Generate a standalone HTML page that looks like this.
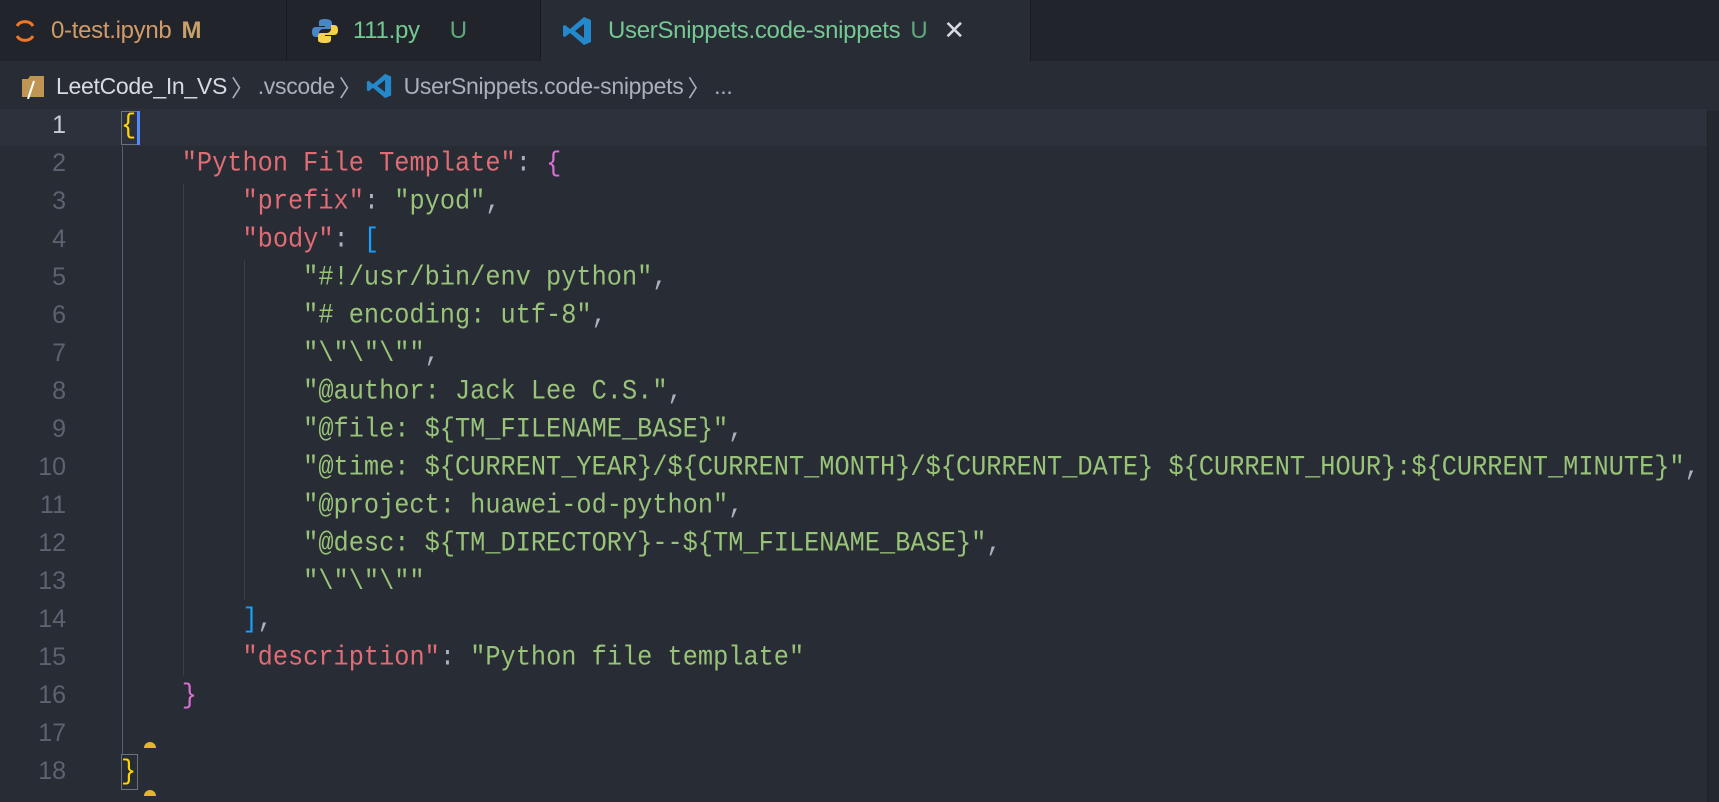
<!DOCTYPE html>
<html><head><meta charset="utf-8"><style>
*{margin:0;padding:0;box-sizing:border-box}
body{width:1719px;height:802px;background:#282c34;overflow:hidden;position:relative;font-family:"Liberation Sans",sans-serif}
#tabs{position:absolute;left:0;top:0;width:1719px;height:61px;background:#21252b}
.tab{position:absolute;top:0;height:61px;border-right:1px solid #181a1f;display:flex;align-items:center;font-size:24px;white-space:nowrap;letter-spacing:-0.3px}
#crumb{position:absolute;left:0;top:61px;width:1719px;height:50px;color:#a9b0bd;font-size:23px;display:flex;align-items:center;letter-spacing:-0.3px}
.ln{position:absolute;left:0;width:66px;text-align:right;color:#5c6370;font-family:"Liberation Sans",sans-serif;font-size:25px}
.code{position:absolute;left:121px;font-family:"Liberation Mono",monospace;font-size:25.3px;white-space:pre;color:#abb2bf;transform:scaleY(1.08);transform-origin:0 50%}
.k{color:#e06c75}.s{color:#98c379}.y{color:#ffd700}.p{color:#da70d6}.b{color:#179fff}
.g{position:absolute;width:1px;background:#3b4048}
</style></head><body>
<div id="tabs">
 <div class="tab" style="left:0;width:287px">
  <svg style="margin-left:14px" width="22" height="28" viewBox="0 0 22 28"><path d="M3 9 A9 8 0 0 1 19 9" stroke="#f37626" stroke-width="3" fill="none"/><path d="M3 19 A9 8 0 0 0 19 19" stroke="#f37626" stroke-width="3" fill="none"/></svg>
  <span style="color:#d19a66;margin-left:15px">0-test.ipynb</span><span style="color:#c8a06a;margin-left:10px;font-weight:bold">M</span></div>
 <div class="tab" style="left:287px;width:254px">
  <svg style="margin-left:24px" width="28" height="28" viewBox="0 0 28 28"><path d="M14 2c-6 0-6 2-6 4v3h6v1H5c-3 0-4 2-4 5s1 5 4 5h3v-4c0-2 2-4 4-4h6c2 0 3-1 3-3V6c0-2-2-4-7-4z" fill="#4a86c5"/><path d="M14 26c6 0 6-2 6-4v-3h-6v-1h9c3 0 4-2 4-5s-1-5-4-5h-3v4c0 2-2 4-4 4h-6c-2 0-3 1-3 3v4c0 2 2 3 7 3z" fill="#f7d14a"/></svg>
  <span style="color:#73c991;margin-left:14px">111.py</span><span style="color:#5fa77a;margin-left:30px">U</span></div>
 <div class="tab" style="left:541px;width:490px;background:#282c34">
  <svg style="margin-left:21px" width="30" height="30" viewBox="0 0 30 30"><path d="M22 1 L29 4 V26 L22 29 L8 17 L3 21 L1 20 V10 L3 9 L8 13 Z M22 8 L13 15 L22 22 Z" fill="#2489ca"/></svg>
  <span style="color:#73c991;margin-left:16px">UserSnippets.code-snippets</span><span style="color:#5fa77a;margin-left:10px">U</span><span style="color:#d7dae0;margin-left:16px;font-size:26px">✕</span></div>
</div>
<div id="crumb">
 <svg style="margin-left:20px" width="26" height="26" viewBox="0 0 26 26"><path d="M2 6h6l2-3h14v21H2z" fill="#c09553"/><path d="M14 8 L8 26" stroke="#fff" stroke-width="2"/></svg>
 <span style="margin-left:10px;color:#d7dae0">LeetCode_In_VS</span><span style="margin:0 4px">〉</span><span>.vscode</span><span style="margin:0 4px">〉</span>
 <svg width="26" height="26" viewBox="0 0 30 30"><path d="M22 1 L29 4 V26 L22 29 L8 17 L3 21 L1 20 V10 L3 9 L8 13 Z M22 8 L13 15 L22 22 Z" fill="#2489ca"/></svg>
 <span style="margin-left:12px">UserSnippets.code-snippets</span><span style="margin:0 4px">〉</span><span>...</span>
</div>
<div style="position:absolute;left:0;top:109px;width:1707px;height:37px;background:#2c313c"></div>
<div style="position:absolute;left:1707px;top:111px;width:12px;height:691px;background:#23272e;border-left:1px solid #1e2127"></div>
<div style="position:absolute;left:121px;top:111px;width:17px;height:34px;border:1px solid #6b717d"></div>
<div style="position:absolute;left:137px;top:111px;width:3px;height:34px;background:#528bff"></div>
<div style="position:absolute;left:121px;top:754px;width:17px;height:36px;border:1px solid #6b717d"></div>
<div class="g" style="left:122px;top:146px;height:608px;background:#5a606b"></div>
<div class="g" style="left:183px;top:184px;height:492px"></div>
<div class="g" style="left:244px;top:260px;height:340px"></div>
<div style="position:absolute;left:144px;top:742px;width:12px;height:6px;background:#e5b530;border-radius:6px 6px 0 0"></div>
<div style="position:absolute;left:144px;top:790px;width:12px;height:6px;background:#e5b530;border-radius:6px 6px 0 0"></div>
<div class="ln" style="top:111px;color:#c8ccd4">1</div>
<div class="ln" style="top:149px">2</div><div class="ln" style="top:187px">3</div><div class="ln" style="top:225px">4</div>
<div class="ln" style="top:263px">5</div><div class="ln" style="top:301px">6</div><div class="ln" style="top:339px">7</div>
<div class="ln" style="top:377px">8</div><div class="ln" style="top:415px">9</div><div class="ln" style="top:453px">10</div>
<div class="ln" style="top:491px">11</div><div class="ln" style="top:529px">12</div><div class="ln" style="top:567px">13</div>
<div class="ln" style="top:605px">14</div><div class="ln" style="top:643px">15</div><div class="ln" style="top:681px">16</div>
<div class="ln" style="top:719px">17</div><div class="ln" style="top:757px">18</div>
<div class="code" style="top:111px"><span class="y">{</span></div>
<div class="code" style="top:149px">    <span class="k">"Python File Template"</span>: <span class="p">{</span></div>
<div class="code" style="top:187px">        <span class="k">"prefix"</span>: <span class="s">"pyod"</span>,</div>
<div class="code" style="top:225px">        <span class="k">"body"</span>: <span class="b">[</span></div>
<div class="code" style="top:263px">            <span class="s">"#!/usr/bin/env python"</span>,</div>
<div class="code" style="top:301px">            <span class="s">"# encoding: utf-8"</span>,</div>
<div class="code" style="top:339px">            <span class="s">"\"\"\""</span>,</div>
<div class="code" style="top:377px">            <span class="s">"@author: Jack Lee C.S."</span>,</div>
<div class="code" style="top:415px">            <span class="s">"@file: ${TM_FILENAME_BASE}"</span>,</div>
<div class="code" style="top:453px">            <span class="s">"@time: ${CURRENT_YEAR}/${CURRENT_MONTH}/${CURRENT_DATE} ${CURRENT_HOUR}:${CURRENT_MINUTE}"</span>,</div>
<div class="code" style="top:491px">            <span class="s">"@project: huawei-od-python"</span>,</div>
<div class="code" style="top:529px">            <span class="s">"@desc: ${TM_DIRECTORY}--${TM_FILENAME_BASE}"</span>,</div>
<div class="code" style="top:567px">            <span class="s">"\"\"\""</span></div>
<div class="code" style="top:605px">        <span class="b">]</span>,</div>
<div class="code" style="top:643px">        <span class="k">"description"</span>: <span class="s">"Python file template"</span></div>
<div class="code" style="top:681px">    <span class="p">}</span></div>
<div class="code" style="top:757px"><span class="y">}</span></div>
</body></html>
